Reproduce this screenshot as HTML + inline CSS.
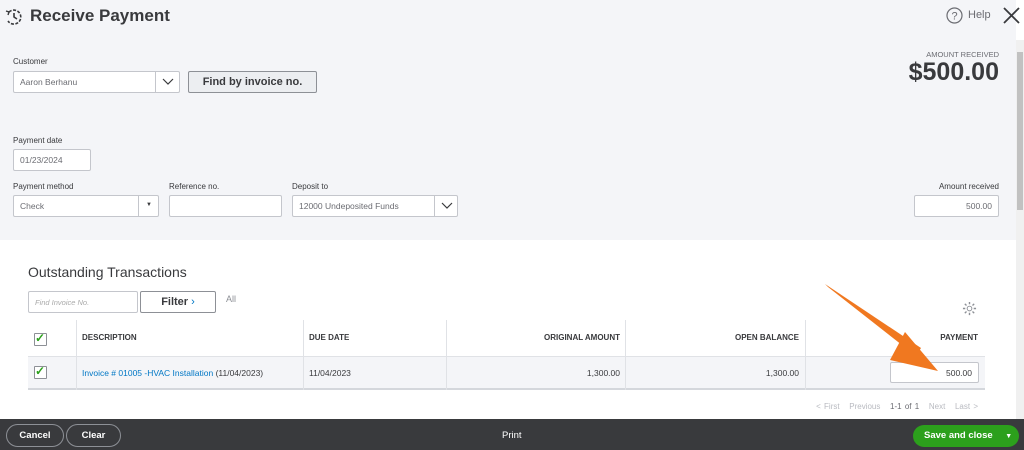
<!DOCTYPE html>
<html><head><style>
*{margin:0;padding:0;box-sizing:border-box}
body{width:1024px;height:450px;position:relative;overflow:hidden;background:#fff;font-family:"Liberation Sans",sans-serif;color:#393a3d}
.a{position:absolute}
.top{left:0;top:0;width:1016px;height:240px;background:#f4f5f8}
.lbl{font-size:8px;color:#393a3d}
.inp{background:#fff;border:1px solid #c4c6cc;border-radius:2px;font-size:8.5px;color:#6b6c72;padding-left:6px;display:flex;align-items:center}
.th{font-size:8px;font-weight:bold;color:#393a3d;top:333px}
.td{font-size:8.5px;color:#393a3d;top:368px}
.vl{width:1px;background:#e0e2e6;top:320px;height:70px}
.chk{width:13px;height:13px;border:1px solid #8d9096;background:#fff;border-radius:1px}
</style></head><body>
<div class="a top"></div>
<svg class="a" style="left:5px;top:8px" width="18" height="18" viewBox="0 0 18 18"><path d="M4 4a7 7 0 1 1-1 9" fill="none" stroke="#393a3d" stroke-width="1.6" stroke-dasharray="3 1.5"/><path d="M9 5v4l3 2" fill="none" stroke="#393a3d" stroke-width="1.6"/><path d="M1 3l3 1-1 3" fill="none" stroke="#393a3d" stroke-width="1.4"/></svg>
<div class="a" style="left:30px;top:6px;font-size:17px;font-weight:bold;color:#393a3d">Receive Payment</div>
<svg class="a" style="left:946px;top:7px" width="17" height="17"><circle cx="8.5" cy="8.5" r="7.5" fill="none" stroke="#6b6c72" stroke-width="1.2"/><text x="8.5" y="12.5" font-size="11" text-anchor="middle" fill="#6b6c72" font-family="Liberation Sans">?</text></svg>
<div class="a" style="left:968px;top:9px;font-size:11px;color:#6b6c72">Help</div>
<svg class="a" style="left:1003px;top:7px" width="17" height="17"><path d="M1 1L16 16M16 1L1 16" stroke="#393a3d" stroke-width="1.8"/></svg>
<div class="a" style="left:1016px;top:40px;width:8px;height:380px;background:#f0f0f0"></div>
<div class="a" style="left:1017px;top:52px;width:6px;height:158px;background:#c1c1c1"></div>

<div class="a lbl" style="left:13px;top:57px">Customer</div>
<div class="a inp" style="left:13px;top:71px;width:167px;height:22px">Aaron Berhanu</div>
<div class="a" style="left:155px;top:71px;width:1px;height:22px;background:#c4c6cc"></div>
<svg class="a" style="left:162px;top:78px" width="12" height="8"><path d="M1 1l5 5 5-5" fill="none" stroke="#393a3d" stroke-width="1.2"/></svg>
<div class="a" style="left:188px;top:71px;width:129px;height:22px;border:1px solid #8d9096;border-radius:2px;background:#eceef1;font-size:11px;font-weight:bold;text-align:center;line-height:20px">Find by invoice no.</div>

<div class="a" style="right:25px;top:50px;font-size:7.5px;color:#6b6c72">AMOUNT RECEIVED</div>
<div class="a" style="right:25px;top:58px;font-size:25px;font-weight:bold;color:#393a3d">$500.00</div>

<div class="a lbl" style="left:13px;top:136px">Payment date</div>
<div class="a inp" style="left:13px;top:149px;width:78px;height:22px">01/23/2024</div>

<div class="a lbl" style="left:13px;top:182px">Payment method</div>
<div class="a inp" style="left:13px;top:195px;width:146px;height:22px">Check</div>
<div class="a" style="left:138px;top:195px;width:1px;height:22px;background:#c4c6cc"></div>
<div class="a" style="left:146px;top:202px;font-size:6px">▼</div>
<div class="a lbl" style="left:169px;top:182px">Reference no.</div>
<div class="a inp" style="left:169px;top:195px;width:113px;height:22px"></div>
<div class="a lbl" style="left:292px;top:182px">Deposit to</div>
<div class="a inp" style="left:292px;top:195px;width:166px;height:22px">12000 Undeposited Funds</div>
<div class="a" style="left:434px;top:195px;width:1px;height:22px;background:#c4c6cc"></div>
<svg class="a" style="left:441px;top:202px" width="12" height="8"><path d="M1 1l5 5 5-5" fill="none" stroke="#393a3d" stroke-width="1.2"/></svg>
<div class="a lbl" style="right:25px;top:182px">Amount received</div>
<div class="a inp" style="left:914px;top:195px;width:85px;height:22px;justify-content:flex-end;padding-right:6px">500.00</div>

<div class="a" style="left:28px;top:264px;font-size:14px;color:#393a3d">Outstanding Transactions</div>
<div class="a inp" style="left:28px;top:291px;width:110px;height:22px;font-style:italic;font-size:7.5px;color:#aaa">Find Invoice No.</div>
<div class="a" style="left:140px;top:291px;width:76px;height:22px;border:1px solid #8d9096;border-radius:2px;font-size:11px;font-weight:bold;text-align:center;line-height:20px">Filter <span style="color:#0077c5;font-weight:normal">›</span></div>
<div class="a" style="left:226px;top:294px;font-size:9px;color:#8d9096">All</div>
<svg class="a" style="left:962px;top:301px" width="15" height="15" viewBox="0 0 16 16"><circle cx="8" cy="8" r="2.5" fill="none" stroke="#8d9096"/><path d="M8 1v2.5M8 12.5V15M1 8h2.5M12.5 8H15M3 3l1.8 1.8M11.2 11.2L13 13M3 13l1.8-1.8M11.2 4.8L13 3" stroke="#8d9096" stroke-width="1.5"/></svg>

<div class="a" style="left:28px;top:356px;width:957px;height:34px;background:#f4f5f8;border-top:1px solid #e0e2e6;border-bottom:2px solid #d4d7dc"></div>
<div class="a vl" style="left:76px"></div><div class="a vl" style="left:303px"></div><div class="a vl" style="left:446px"></div><div class="a vl" style="left:625px"></div><div class="a vl" style="left:805px"></div>
<div class="a chk" style="left:34px;top:333px"></div><div class="a" style="left:35px;top:331px;color:#2ca01c;font-size:12px;font-weight:bold">✓</div>
<div class="a chk" style="left:34px;top:366px"></div><div class="a" style="left:35px;top:364px;color:#2ca01c;font-size:12px;font-weight:bold">✓</div>
<div class="a th" style="left:82px">DESCRIPTION</div>
<div class="a th" style="left:309px">DUE DATE</div>
<div class="a th" style="right:404px">ORIGINAL AMOUNT</div>
<div class="a th" style="right:225px">OPEN BALANCE</div>
<div class="a th" style="right:46px">PAYMENT</div>
<div class="a td" style="left:82px"><span style="color:#0077c5">Invoice # 01005 -HVAC Installation</span> (11/04/2023)</div>
<div class="a td" style="left:309px">11/04/2023</div>
<div class="a td" style="right:404px">1,300.00</div>
<div class="a td" style="right:225px">1,300.00</div>
<div class="a inp" style="left:890px;top:362px;width:89px;height:21px;justify-content:flex-end;padding-right:6px;color:#393a3d">500.00</div>
<div class="a" style="right:46px;top:402px;font-size:8px;color:#b8bac0;word-spacing:1px;white-space:nowrap">&lt; First &nbsp; Previous &nbsp; <span style="color:#6b6c72">1-1 of 1</span> &nbsp; Next &nbsp; Last &gt;</div>

<svg class="a" style="left:820px;top:280px" width="135" height="100"><path d="M5 4L8 7L96 76L101 68Z" fill="#f07820"/><path d="M85 52L118 91L70 80Z" fill="#f07820"/></svg>

<div class="a" style="left:0;top:419px;width:1024px;height:31px;background:#393a3d"></div>
<div class="a" style="left:6px;top:424px;width:58px;height:23px;border:1px solid #8d9096;border-radius:12px;color:#fff;font-size:9.5px;font-weight:bold;text-align:center;line-height:21px">Cancel</div>
<div class="a" style="left:66px;top:424px;width:55px;height:23px;border:1px solid #8d9096;border-radius:12px;color:#fff;font-size:9.5px;font-weight:bold;text-align:center;line-height:21px">Clear</div>
<div class="a" style="left:502px;top:430px;color:#fff;font-size:9.5px">Print</div>
<div class="a" style="left:913px;top:425px;width:106px;height:22px;background:#2ca01c;border-radius:12px;color:#fff;font-size:9.5px;font-weight:bold;line-height:22px;padding-left:11px">Save and close <span style="font-size:7px;margin-left:10px">▼</span></div>
</body></html>
